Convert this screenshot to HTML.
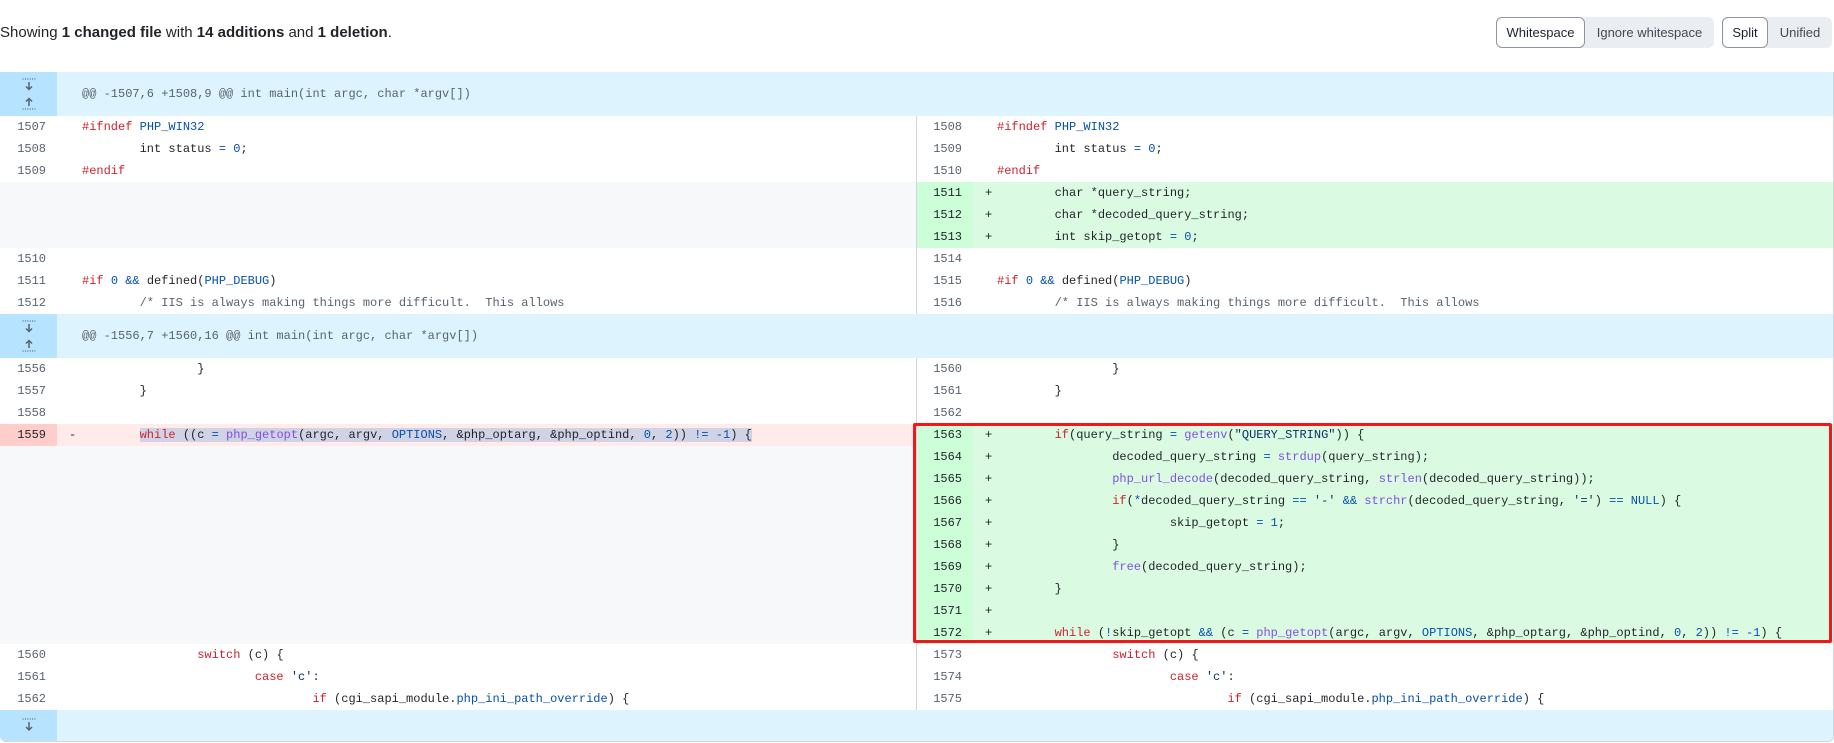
<!DOCTYPE html>
<html><head><meta charset="utf-8"><style>
*{box-sizing:border-box;margin:0;padding:0}
body{width:1834px;height:743px;overflow:hidden;background:#fff;font-family:"Liberation Sans",sans-serif;color:#1f2328;position:relative}
.title{position:absolute;left:0;top:22px;font-size:15px;line-height:22px;color:#1f2328;white-space:nowrap}
.title b{font-weight:600}
.grp{position:absolute;top:17px;height:31px;background:#eaeef2;border-radius:6px;display:flex;font-size:13px;white-space:nowrap}
.grp div{flex:none;height:31px;line-height:29px;text-align:center;color:#424a53;border:1px solid transparent}
.grp .on{background:#fff;border:1px solid #8c959f;border-radius:6px;color:#1f2328}
.diff{position:absolute;left:0;top:72px;width:1834px;border-right:1px solid #d0d7de;border-bottom:1px solid #d0d7de;border-radius:0 0 6px 6px;overflow:hidden}
.row{display:flex;height:22px;line-height:22px;font-family:"Liberation Mono",monospace;font-size:12px;white-space:pre;tab-size:8;-moz-tab-size:8}
.half{display:flex;width:916px;flex:none}
.half.r{width:918px;border-left:1px solid #d0d7de}
.n{width:57px;flex:none;text-align:right;padding-right:11px;color:#59636e}
.r .n{width:56px}
.m{width:25px;flex:none;padding-left:12px}
.r .m{width:24px}
.c{flex:1;overflow:hidden}
.empty{background:#f6f8fa}
.add{background:#dafbe1}.add .n{background:#ccffd8;color:#1f2328}
.del{background:#ffebe9}.del .n{background:#ffcecb;color:#1f2328}
.hunk{display:flex;height:44px;background:#ddf4ff;font-family:"Liberation Mono",monospace;font-size:12px;color:#59636e}
.hunk .g{width:57px;flex:none;background:#b6e3ff;display:flex;align-items:center;justify-content:center}
.hunk .t{padding-left:25px;line-height:44px;white-space:pre}
.k{color:#cf222e}.b{color:#0550ae}.f{color:#8250df}.s{color:#0a3069}
.hl{background:#d0d2e6}
.box{position:absolute;left:913px;top:423px;width:919px;height:220px;border:3px solid #f5151a;border-radius:2px}
</style></head><body>
<div class="title">Showing <b>1 changed file</b> with <b>14 additions</b> and <b>1 deletion</b>.</div>
<div class="grp" style="left:1496px;width:218px"><div class="on" style="width:89px">Whitespace</div><div style="width:129px">Ignore whitespace</div></div>
<div class="grp" style="left:1722px;width:110px"><div class="on" style="width:46px">Split</div><div style="width:64px">Unified</div></div>

<div class="diff">
<div class="hunk"><div class="g"><svg width="16" height="36" viewBox="0 0 16 36"><g fill="#59636e"><circle cx="2" cy="3" r=".6"/><circle cx="4.4" cy="3" r=".6"/><circle cx="6.8" cy="3" r=".6"/><circle cx="9.2" cy="3" r=".6"/><circle cx="11.6" cy="3" r=".6"/><circle cx="14" cy="3" r=".6"/><circle cx="2" cy="33" r=".6"/><circle cx="4.4" cy="33" r=".6"/><circle cx="6.8" cy="33" r=".6"/><circle cx="9.2" cy="33" r=".6"/><circle cx="11.6" cy="33" r=".6"/><circle cx="14" cy="33" r=".6"/></g><path d="M8 6v7M5 10.5l3 3 3-3M8 30v-7M5 25.5l3-3 3 3" stroke="#59636e" stroke-width="1.5" fill="none"/></svg></div><div class="t">@@ -1507,6 +1508,9 @@ int main(int argc, char *argv[])</div></div>

<div class="row"><div class="half"><div class="n">1507</div><div class="m"></div><div class="c"><span class="k">#ifndef</span> <span class="b">PHP_WIN32</span></div></div><div class="half r"><div class="n">1508</div><div class="m"></div><div class="c"><span class="k">#ifndef</span> <span class="b">PHP_WIN32</span></div></div></div>
<div class="row"><div class="half"><div class="n">1508</div><div class="m"></div><div class="c">	int status <span class="b">=</span> <span class="b">0</span>;</div></div><div class="half r"><div class="n">1509</div><div class="m"></div><div class="c">	int status <span class="b">=</span> <span class="b">0</span>;</div></div></div>
<div class="row"><div class="half"><div class="n">1509</div><div class="m"></div><div class="c"><span class="k">#endif</span></div></div><div class="half r"><div class="n">1510</div><div class="m"></div><div class="c"><span class="k">#endif</span></div></div></div>
<div class="row"><div class="half empty"></div><div class="half r add"><div class="n">1511</div><div class="m">+</div><div class="c">	char *query_string;</div></div></div>
<div class="row"><div class="half empty"></div><div class="half r add"><div class="n">1512</div><div class="m">+</div><div class="c">	char *decoded_query_string;</div></div></div>
<div class="row"><div class="half empty"></div><div class="half r add"><div class="n">1513</div><div class="m">+</div><div class="c">	int skip_getopt <span class="b">=</span> <span class="b">0</span>;</div></div></div>
<div class="row"><div class="half"><div class="n">1510</div><div class="m"></div><div class="c"></div></div><div class="half r"><div class="n">1514</div><div class="m"></div><div class="c"></div></div></div>
<div class="row"><div class="half"><div class="n">1511</div><div class="m"></div><div class="c"><span class="k">#if</span> <span class="b">0</span> <span class="b">&amp;&amp;</span> defined(<span class="b">PHP_DEBUG</span>)</div></div><div class="half r"><div class="n">1515</div><div class="m"></div><div class="c"><span class="k">#if</span> <span class="b">0</span> <span class="b">&amp;&amp;</span> defined(<span class="b">PHP_DEBUG</span>)</div></div></div>
<div class="row"><div class="half"><div class="n">1512</div><div class="m"></div><div class="c" style="color:#59636e">	/* IIS is always making things more difficult.  This allows</div></div><div class="half r"><div class="n">1516</div><div class="m"></div><div class="c" style="color:#59636e">	/* IIS is always making things more difficult.  This allows</div></div></div>

<div class="hunk"><div class="g"><svg width="16" height="36" viewBox="0 0 16 36"><g fill="#59636e"><circle cx="2" cy="3" r=".6"/><circle cx="4.4" cy="3" r=".6"/><circle cx="6.8" cy="3" r=".6"/><circle cx="9.2" cy="3" r=".6"/><circle cx="11.6" cy="3" r=".6"/><circle cx="14" cy="3" r=".6"/><circle cx="2" cy="33" r=".6"/><circle cx="4.4" cy="33" r=".6"/><circle cx="6.8" cy="33" r=".6"/><circle cx="9.2" cy="33" r=".6"/><circle cx="11.6" cy="33" r=".6"/><circle cx="14" cy="33" r=".6"/></g><path d="M8 6v7M5 10.5l3 3 3-3M8 30v-7M5 25.5l3-3 3 3" stroke="#59636e" stroke-width="1.5" fill="none"/></svg></div><div class="t">@@ -1556,7 +1560,16 @@ int main(int argc, char *argv[])</div></div>

<div class="row"><div class="half"><div class="n">1556</div><div class="m"></div><div class="c">		}</div></div><div class="half r"><div class="n">1560</div><div class="m"></div><div class="c">		}</div></div></div>
<div class="row"><div class="half"><div class="n">1557</div><div class="m"></div><div class="c">	}</div></div><div class="half r"><div class="n">1561</div><div class="m"></div><div class="c">	}</div></div></div>
<div class="row"><div class="half"><div class="n">1558</div><div class="m"></div><div class="c"></div></div><div class="half r"><div class="n">1562</div><div class="m"></div><div class="c"></div></div></div>
<div class="row"><div class="half del"><div class="n">1559</div><div class="m">-</div><div class="c">	<span class="hl"><span class="k">while</span> ((c <span class="b">=</span> <span class="f">php_getopt</span>(argc, argv, <span class="b">OPTIONS</span>, &amp;php_optarg, &amp;php_optind, <span class="b">0</span>, <span class="b">2</span>)) <span class="b">!=</span> <span class="b">-1</span>) {</span></div></div><div class="half r add"><div class="n">1563</div><div class="m">+</div><div class="c">	<span class="k">if</span>(query_string <span class="b">=</span> <span class="f">getenv</span>(<span class="s">"QUERY_STRING"</span>)) {</div></div></div>
<div class="row"><div class="half empty"></div><div class="half r add"><div class="n">1564</div><div class="m">+</div><div class="c">		decoded_query_string <span class="b">=</span> <span class="f">strdup</span>(query_string);</div></div></div>
<div class="row"><div class="half empty"></div><div class="half r add"><div class="n">1565</div><div class="m">+</div><div class="c">		<span class="f">php_url_decode</span>(decoded_query_string, <span class="f">strlen</span>(decoded_query_string));</div></div></div>
<div class="row"><div class="half empty"></div><div class="half r add"><div class="n">1566</div><div class="m">+</div><div class="c">		<span class="k">if</span>(<span class="b">*</span>decoded_query_string <span class="b">==</span> <span class="s">'-'</span> <span class="b">&amp;&amp;</span> <span class="f">strchr</span>(decoded_query_string, <span class="s">'='</span>) <span class="b">==</span> <span class="b">NULL</span>) {</div></div></div>
<div class="row"><div class="half empty"></div><div class="half r add"><div class="n">1567</div><div class="m">+</div><div class="c">			skip_getopt <span class="b">=</span> <span class="b">1</span>;</div></div></div>
<div class="row"><div class="half empty"></div><div class="half r add"><div class="n">1568</div><div class="m">+</div><div class="c">		}</div></div></div>
<div class="row"><div class="half empty"></div><div class="half r add"><div class="n">1569</div><div class="m">+</div><div class="c">		<span class="f">free</span>(decoded_query_string);</div></div></div>
<div class="row"><div class="half empty"></div><div class="half r add"><div class="n">1570</div><div class="m">+</div><div class="c">	}</div></div></div>
<div class="row"><div class="half empty"></div><div class="half r add"><div class="n">1571</div><div class="m">+</div><div class="c"></div></div></div>
<div class="row"><div class="half empty"></div><div class="half r add"><div class="n">1572</div><div class="m">+</div><div class="c">	<span class="k">while</span> (<span class="b">!</span>skip_getopt <span class="b">&amp;&amp;</span> (c <span class="b">=</span> <span class="f">php_getopt</span>(argc, argv, <span class="b">OPTIONS</span>, &amp;php_optarg, &amp;php_optind, <span class="b">0</span>, <span class="b">2</span>)) <span class="b">!=</span> <span class="b">-1</span>) {</div></div></div>
<div class="row"><div class="half"><div class="n">1560</div><div class="m"></div><div class="c">		<span class="k">switch</span> (c) {</div></div><div class="half r"><div class="n">1573</div><div class="m"></div><div class="c">		<span class="k">switch</span> (c) {</div></div></div>
<div class="row"><div class="half"><div class="n">1561</div><div class="m"></div><div class="c">			<span class="k">case</span> <span class="s">'c'</span>:</div></div><div class="half r"><div class="n">1574</div><div class="m"></div><div class="c">			<span class="k">case</span> <span class="s">'c'</span>:</div></div></div>
<div class="row"><div class="half"><div class="n">1562</div><div class="m"></div><div class="c">				<span class="k">if</span> (cgi_sapi_module.<span class="b">php_ini_path_override</span>) {</div></div><div class="half r"><div class="n">1575</div><div class="m"></div><div class="c">				<span class="k">if</span> (cgi_sapi_module.<span class="b">php_ini_path_override</span>) {</div></div></div>

<div class="hunk" style="height:31px"><div class="g"><svg width="16" height="24" viewBox="0 0 16 24"><g fill="#59636e"><circle cx="2" cy="5" r=".6"/><circle cx="4.4" cy="5" r=".6"/><circle cx="6.8" cy="5" r=".6"/><circle cx="9.2" cy="5" r=".6"/><circle cx="11.6" cy="5" r=".6"/><circle cx="14" cy="5" r=".6"/></g><path d="M8 8v8M5 13l3 3 3-3" stroke="#59636e" stroke-width="1.5" fill="none"/></svg></div></div>
</div>
<div class="box"></div>
</body></html>
